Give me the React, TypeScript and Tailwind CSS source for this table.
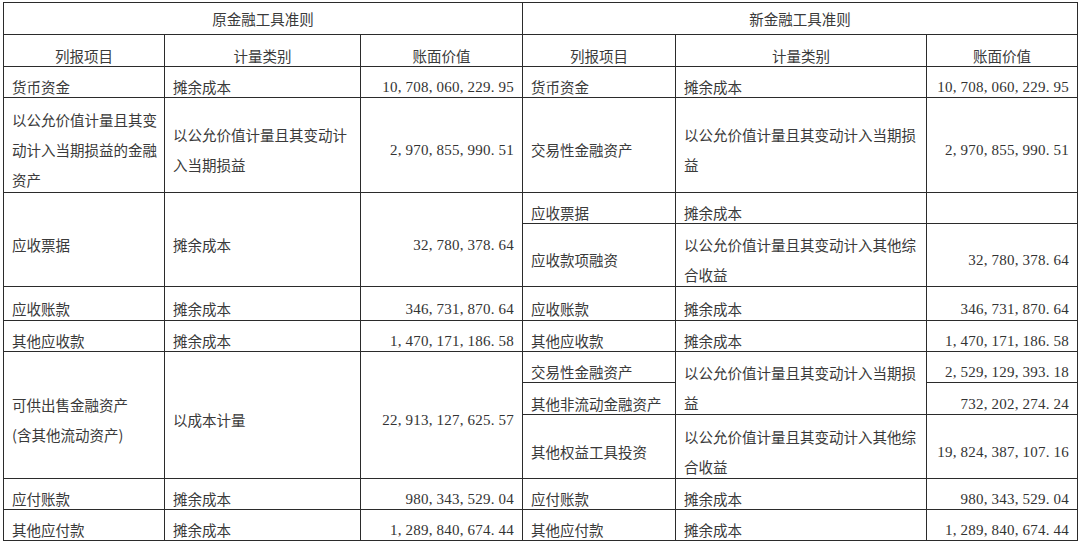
import React, { ReactNode } from 'react';

const cjk = "font-['Noto_Sans_CJK_SC',sans-serif]";

// SimSun-like spacing: half-width punctuation takes the same room as a digit
function Num({ value }: { value: string }) {
    return (
        <>
            {value.split('').map((ch, i) =>
                ch === ',' || ch === '.' ? (
                    <span key={i} className="mr-[3.5px]">
                        {ch}
                    </span>
                ) : (
                    <span key={i}>{ch}</span>
                )
            )}
        </>
    );
}

function Cell({
    children,
    align = 'left',
    rowSpan,
    colSpan,
    num,
    shift = true,
}: {
    children?: ReactNode;
    align?: 'left' | 'right' | 'center';
    rowSpan?: number;
    colSpan?: number;
    num?: string;
    shift?: boolean;
}) {
    const isNum = num !== undefined;
    return (
        <td
            rowSpan={rowSpan}
            colSpan={colSpan}
            className={
                'border border-[#2b2b2b] px-[8px] py-0 align-middle ' +
                (isNum || align === 'right' ? 'text-right ' : align === 'center' ? 'text-center ' : 'text-left ')
            }
        >
            <div
                className={
                    'whitespace-nowrap leading-[30px] ' +
                    (shift ? 'translate-y-[5px] ' : '') +
                    (isNum
                        ? "font-['Liberation_Serif',serif] text-[15px] tracking-[0.3px] text-[#333333]"
                        : cjk + ' text-[14.5px] text-[#3a3a3a]')
                }
            >
                {isNum ? <Num value={num} /> : children}
            </div>
        </td>
    );
}

export default function App() {
    return (
        <div className="min-h-[543px] w-[1080px] bg-white pl-[3px] pt-[2px]">
            <table className="table-fixed border-collapse w-[1074px]">
                <colgroup>
                    <col className="w-[161px]" />
                    <col className="w-[196px]" />
                    <col className="w-[162px]" />
                    <col className="w-[153px]" />
                    <col className="w-[251px]" />
                    <col className="w-[151px]" />
                </colgroup>
                <tbody>
                    <tr className="h-[32px]">
                        <Cell colSpan={3} align="center" shift={false}>原金融工具准则</Cell>
                        <Cell colSpan={3} align="center" shift={false}>新金融工具准则</Cell>
                    </tr>
                    <tr className="h-[32px]">
                        <Cell align="center">列报项目</Cell>
                        <Cell align="center">计量类别</Cell>
                        <Cell align="center">账面价值</Cell>
                        <Cell align="center">列报项目</Cell>
                        <Cell align="center">计量类别</Cell>
                        <Cell align="center">账面价值</Cell>
                    </tr>
                    <tr className="h-[31px]">
                        <Cell>货币资金</Cell>
                        <Cell>摊余成本</Cell>
                        <Cell num="10,708,060,229.95" />
                        <Cell>货币资金</Cell>
                        <Cell>摊余成本</Cell>
                        <Cell num="10,708,060,229.95" />
                    </tr>
                    <tr className="h-[95px]">
                        <Cell>
                            以公允价值计量且其变<br />动计入当期损益的金融<br />资产
                        </Cell>
                        <Cell>
                            以公允价值计量且其变动计<br />入当期损益
                        </Cell>
                        <Cell num="2,970,855,990.51" />
                        <Cell>交易性金融资产</Cell>
                        <Cell>
                            以公允价值计量且其变动计入当期损<br />益
                        </Cell>
                        <Cell num="2,970,855,990.51" />
                    </tr>
                    <tr className="h-[31px]">
                        <Cell rowSpan={2}>应收票据</Cell>
                        <Cell rowSpan={2}>摊余成本</Cell>
                        <Cell rowSpan={2} num="32,780,378.64" />
                        <Cell>应收票据</Cell>
                        <Cell>摊余成本</Cell>
                        <Cell align="right"></Cell>
                    </tr>
                    <tr className="h-[63px]">
                        <Cell>应收款项融资</Cell>
                        <Cell>
                            以公允价值计量且其变动计入其他综<br />合收益
                        </Cell>
                        <Cell num="32,780,378.64" />
                    </tr>
                    <tr className="h-[34px]">
                        <Cell>应收账款</Cell>
                        <Cell>摊余成本</Cell>
                        <Cell num="346,731,870.64" />
                        <Cell>应收账款</Cell>
                        <Cell>摊余成本</Cell>
                        <Cell num="346,731,870.64" />
                    </tr>
                    <tr className="h-[31px]">
                        <Cell>其他应收款</Cell>
                        <Cell>摊余成本</Cell>
                        <Cell num="1,470,171,186.58" />
                        <Cell>其他应收款</Cell>
                        <Cell>摊余成本</Cell>
                        <Cell num="1,470,171,186.58" />
                    </tr>
                    <tr className="h-[31px]">
                        <Cell rowSpan={3}>
                            可供出售金融资产<br />(含其他流动资产)
                        </Cell>
                        <Cell rowSpan={3}>以成本计量</Cell>
                        <Cell rowSpan={3} num="22,913,127,625.57" />
                        <Cell>交易性金融资产</Cell>
                        <Cell rowSpan={2}>
                            以公允价值计量且其变动计入当期损<br />益
                        </Cell>
                        <Cell num="2,529,129,393.18" />
                    </tr>
                    <tr className="h-[32px]">
                        <Cell>其他非流动金融资产</Cell>
                        <Cell num="732,202,274.24" />
                    </tr>
                    <tr className="h-[64px]">
                        <Cell>其他权益工具投资</Cell>
                        <Cell>
                            以公允价值计量且其变动计入其他综<br />合收益
                        </Cell>
                        <Cell num="19,824,387,107.16" />
                    </tr>
                    <tr className="h-[31px]">
                        <Cell>应付账款</Cell>
                        <Cell>摊余成本</Cell>
                        <Cell num="980,343,529.04" />
                        <Cell>应付账款</Cell>
                        <Cell>摊余成本</Cell>
                        <Cell num="980,343,529.04" />
                    </tr>
                    <tr className="h-[31px]">
                        <Cell>其他应付款</Cell>
                        <Cell>摊余成本</Cell>
                        <Cell num="1,289,840,674.44" />
                        <Cell>其他应付款</Cell>
                        <Cell>摊余成本</Cell>
                        <Cell num="1,289,840,674.44" />
                    </tr>
                </tbody>
            </table>
        </div>
    );
}
